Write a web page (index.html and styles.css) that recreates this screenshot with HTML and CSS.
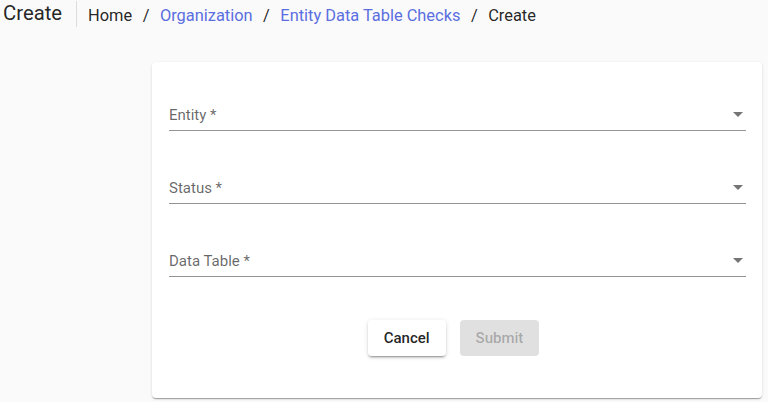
FILE: index.html
```html
<!DOCTYPE html>
<html>
<head>
<meta charset="utf-8">
<link rel="stylesheet" href="styles.css">
</head>
<body>
<header class="topbar">
  <h1 class="title">Create</h1>
  <nav class="crumbs">
    <span class="crumb">Home</span>
    <span class="sep">/</span>
    <a class="crumb link">Organization</a>
    <span class="sep">/</span>
    <a class="crumb link">Entity Data Table Checks</a>
    <span class="sep">/</span>
    <span class="crumb">Create</span>
  </nav>
</header>
<main class="main">
  <section class="card">
    <div class="field"><span class="label">Entity *</span><svg class="arrow" width="10" height="5" viewBox="0 0 10 5"><path d="M0 0h10L5 5z" fill="#757575"/></svg></div>
    <div class="field"><span class="label">Status *</span><svg class="arrow" width="10" height="5" viewBox="0 0 10 5"><path d="M0 0h10L5 5z" fill="#757575"/></svg></div>
    <div class="field"><span class="label">Data Table *</span><svg class="arrow" width="10" height="5" viewBox="0 0 10 5"><path d="M0 0h10L5 5z" fill="#757575"/></svg></div>
    <div class="actions">
      <button class="btn cancel">Cancel</button>
      <button class="btn submit" disabled>Submit</button>
    </div>
  </section>
</main>
</body>
</html>
```
FILE: styles.css
```css
* { box-sizing: border-box; }
html, body { margin: 0; padding: 0; }
body {
  background: #fafafa;
  font-family: Roboto, "Liberation Sans", sans-serif;
  color: rgba(0,0,0,0.87);
  width: 768px;
  height: 402px;
  overflow: hidden;
}
.topbar {
  display: flex;
  align-items: center;
  height: 30px;
  padding-left: 3px;
}
.title {
  margin: 0;
  font-size: 20.3px;
  font-weight: 400;
  line-height: 24px;
  padding-right: 14px;
  border-right: 1px solid #dcdcdc;
  height: 26px;
  margin-top: -2px;
}
.crumbs {
  display: flex;
  align-items: center;
  font-size: 16.4px;
  padding-left: 11px;
}
.sep { margin: 0 10.5px; color: rgba(0,0,0,0.87); }
.link { color: #5b6ee1; text-decoration: none; }
.main {
  padding: 32px 6px 0 152px;
}
.card {
  background: #fff;
  border-radius: 4px;
  box-shadow: 0 2px 1px -1px rgba(0,0,0,0.2), 0 1px 1px 0 rgba(0,0,0,0.14), 0 1px 3px 0 rgba(0,0,0,0.12);
  padding: 20px 16px 40px 17px;
  width: 610px;
  height: 336px;
}
.field {
  height: 49px;
  border-bottom: 1px solid #949494;
  display: flex;
  align-items: flex-end;
  justify-content: space-between;
  padding-bottom: 6px;
}
.field + .field { margin-top: 24px; }
.label {
  font-size: 15px;
  color: rgba(0,0,0,0.6);
  line-height: 18px;
}
.arrow { margin-right: 3px; margin-bottom: 7px; }
.actions {
  display: flex;
  justify-content: center;
  gap: 14px;
  margin-top: 43px;
  padding-right: 8px;
}
.btn {
  font-family: Roboto, "Liberation Sans", sans-serif;
  font-size: 15px;
  font-weight: 500;
  height: 36px;
  padding: 0 16px;
  border: none;
  border-radius: 4px;
}
.cancel {
  background: #fff;
  color: rgba(0,0,0,0.87);
  box-shadow: 0 3px 1px -2px rgba(0,0,0,0.2), 0 2px 2px 0 rgba(0,0,0,0.14), 0 1px 5px 0 rgba(0,0,0,0.12);
}
.submit {
  background: #e0e0e0;
  color: rgba(0,0,0,0.26);
}
```
